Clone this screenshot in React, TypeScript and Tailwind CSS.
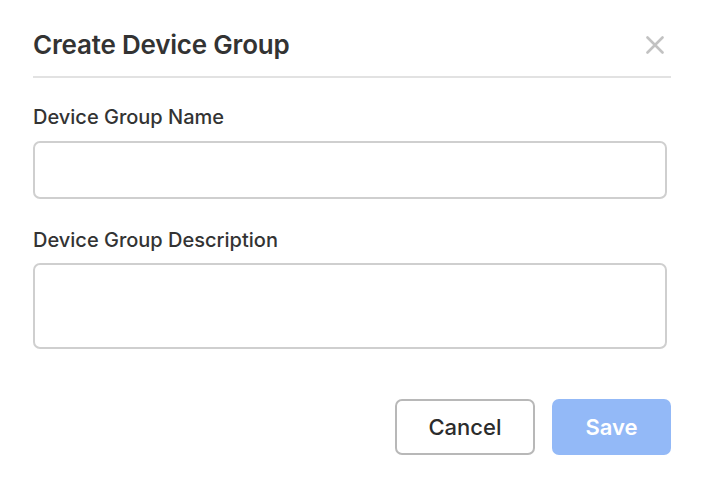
export default function App() {
  return (
    <div className="min-h-screen bg-white font-['Inter',sans-serif] text-[#333333]">
      <div className="w-[702px] pl-[33px] pr-[31px] pt-[30px]">
        {/* Header */}
        <div className="flex items-center justify-between border-b-2 border-[#e2e2e2] pb-[16px]">
          <h2 className="text-[26px] font-semibold leading-[30px] tracking-[-0.2px]">Create Device Group</h2>
          <button className="mr-[7px] text-[#c2c2c2]">
            <svg width="18" height="18" viewBox="0 0 18 18" fill="none" stroke="currentColor" strokeWidth="2.6" strokeLinecap="round">
              <path d="M1.5 1.5 16.5 16.5M16.5 1.5 1.5 16.5" />
            </svg>
          </button>
        </div>

        <form className="pr-[4px]">
          {/* Name */}
          <label className="mt-[27px] block text-[20px] font-medium leading-[24px]">Device Group Name</label>
          <input
            type="text"
            className="mt-[12px] block h-[58px] w-full rounded-[7px] border-2 border-[#cfcfcf] px-3 outline-none"
          />

          {/* Description */}
          <label className="mt-[29px] block text-[20px] font-medium leading-[24px]">Device Group Description</label>
          <textarea className="mt-[11px] block h-[86px] w-full resize-none rounded-[7px] border-2 border-[#cfcfcf] px-3 py-2 outline-none" />
        </form>

        {/* Footer */}
        <div className="mt-[50px] flex justify-end gap-[17px]">
          <button className="h-[56px] w-[140px] rounded-[7px] border-2 border-[#b8b8b8] bg-white text-[22px] font-medium text-[#2c2c2c]">
            Cancel
          </button>
          <button className="h-[56px] w-[119px] rounded-[7px] bg-[#93b9f7] text-[22px] font-semibold text-white">
            Save
          </button>
        </div>
      </div>
    </div>
  )
}
